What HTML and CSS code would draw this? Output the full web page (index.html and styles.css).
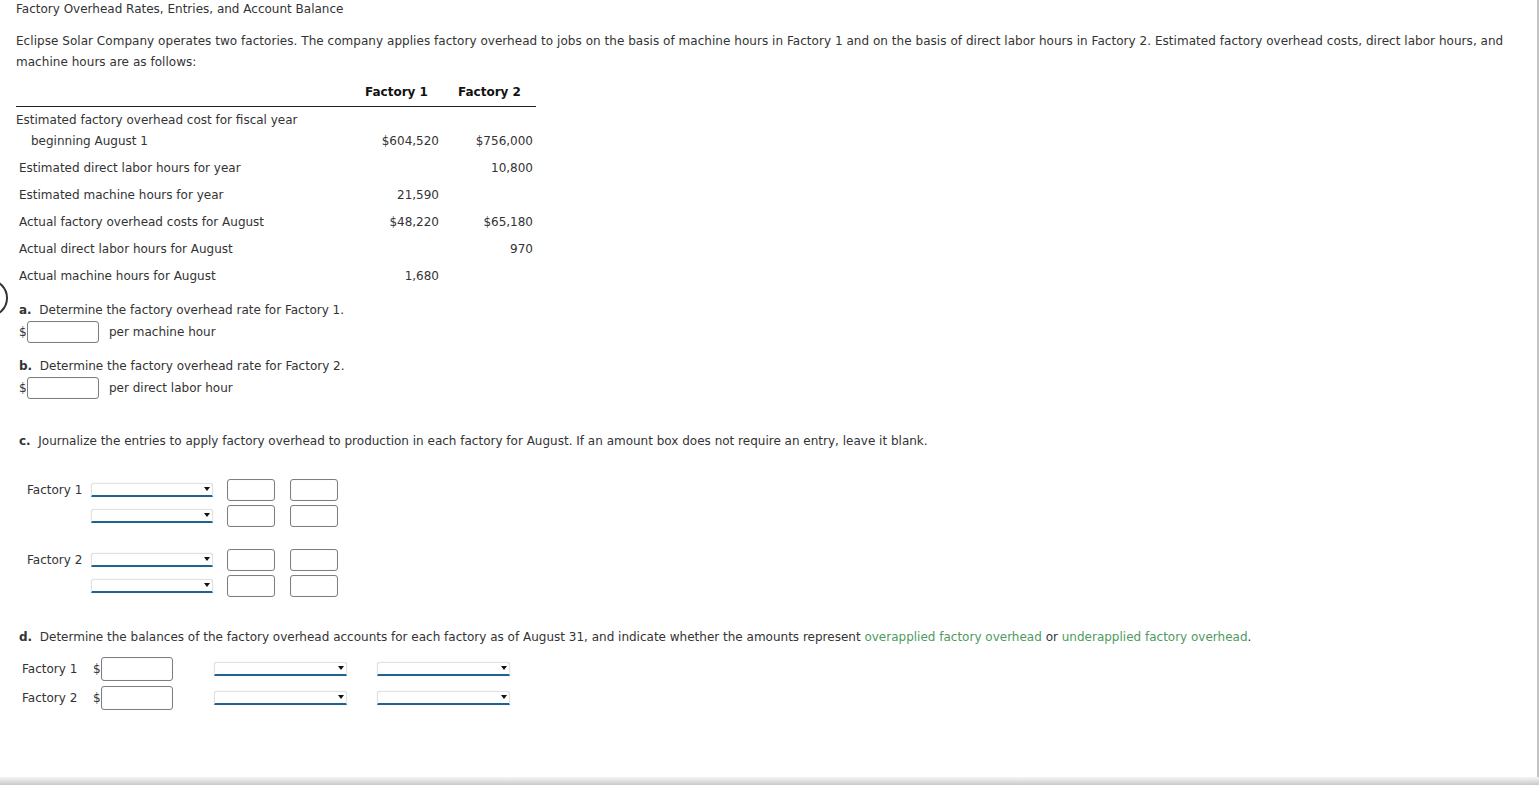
FILE: index.html
```html
<!DOCTYPE html>
<html>
<head>
<meta charset="utf-8">
<link rel="stylesheet" href="styles.css">
</head>
<body>
<div class="page">
  <div class="ring"></div>
  <div class="title">Factory Overhead Rates, Entries, and Account Balance</div>
  <p class="intro">Eclipse Solar Company operates two factories. The company applies factory overhead to jobs on the basis of machine hours in Factory 1 and on the basis of direct labor hours in Factory 2. Estimated factory overhead costs, direct labor hours, and machine hours are as follows:</p>

  <table class="data">
    <thead>
      <tr><th class="lbl"></th><th class="num-h">Factory 1</th><th class="num-h">Factory 2</th></tr>
    </thead>
    <tbody>
      <tr class="first">
        <td class="lbl first-lbl">Estimated factory overhead cost for fiscal year<br><span class="indent">beginning August 1</span></td>
        <td class="num bottom">$604,520</td>
        <td class="num bottom">$756,000</td>
      </tr>
      <tr><td class="lbl">Estimated direct labor hours for year</td><td class="num"></td><td class="num">10,800</td></tr>
      <tr><td class="lbl">Estimated machine hours for year</td><td class="num">21,590</td><td class="num"></td></tr>
      <tr><td class="lbl">Actual factory overhead costs for August</td><td class="num">$48,220</td><td class="num">$65,180</td></tr>
      <tr><td class="lbl">Actual direct labor hours for August</td><td class="num"></td><td class="num">970</td></tr>
      <tr><td class="lbl">Actual machine hours for August</td><td class="num">1,680</td><td class="num"></td></tr>
    </tbody>
  </table>

  <p class="q q-a"><b>a.</b>&nbsp; Determine the factory overhead rate for Factory 1.</p>
  <div class="rate-row">
    <span class="dollar">$</span><input class="box box-rate" type="text"><span class="unit">per machine hour</span>
  </div>

  <p class="q q-b"><b>b.</b>&nbsp; Determine the factory overhead rate for Factory 2.</p>
  <div class="rate-row">
    <span class="dollar">$</span><input class="box box-rate" type="text"><span class="unit">per direct labor hour</span>
  </div>

  <p class="q q-c"><b>c.</b>&nbsp; Journalize the entries to apply factory overhead to production in each factory for August. If an amount box does not require an entry, leave it blank.</p>

  <div class="journal">
    <div class="jgroup">
      <div class="jrow">
        <span class="jlabel">Factory 1</span>
        <span class="dd dd-j"></span>
        <input class="box box-amt" type="text"><input class="box box-amt" type="text">
      </div>
      <div class="jrow">
        <span class="jlabel"></span>
        <span class="dd dd-j"></span>
        <input class="box box-amt" type="text"><input class="box box-amt" type="text">
      </div>
    </div>
    <div class="jgroup">
      <div class="jrow">
        <span class="jlabel">Factory 2</span>
        <span class="dd dd-j"></span>
        <input class="box box-amt" type="text"><input class="box box-amt" type="text">
      </div>
      <div class="jrow">
        <span class="jlabel"></span>
        <span class="dd dd-j"></span>
        <input class="box box-amt" type="text"><input class="box box-amt" type="text">
      </div>
    </div>
  </div>

  <p class="q q-d"><b>d.</b>&nbsp; Determine the balances of the factory overhead accounts for each factory as of August 31, and indicate whether the amounts represent <span class="term">overapplied factory overhead</span> or <span class="term">underapplied factory overhead</span>.</p>

  <div class="balances">
    <div class="brow">
      <span class="blabel">Factory 1</span><span class="dollar">$</span><input class="box box-bal" type="text">
      <span class="dd dd-b dd-first"></span><span class="dd dd-b"></span>
    </div>
    <div class="brow">
      <span class="blabel">Factory 2</span><span class="dollar">$</span><input class="box box-bal" type="text">
      <span class="dd dd-b dd-first"></span><span class="dd dd-b"></span>
    </div>
  </div>
</div>
<div class="shade"></div>
</body>
</html>
```

FILE: styles.css
```css
html, body {
  margin: 0;
  padding: 0;
  background: #ffffff;
  overflow: hidden;
}

body {
  font-family: "DejaVu Sans", Verdana, sans-serif;
  font-size: 12px;
  color: #333333;
}

.page {
  position: relative;
  box-sizing: border-box;
  width: 1539px;
  height: 777px;
  padding-left: 16px;
  padding-top: 1px;
  border-right: 2px solid #c4c4c4;
  overflow: hidden;
}

.ring {
  position: absolute;
  left: -30px;
  top: 279px;
  width: 34px;
  height: 34px;
  border: 2px solid #333;
  border-radius: 50%;
}

.title {
  line-height: 17px;
}

.intro {
  margin: 13px 0 0 0;
  line-height: 21px;
  width: 1500px;
  letter-spacing: 0.04px;
}

.data {
  margin-top: 9px;
  border-collapse: collapse;
  width: 520px;
}

.data th {
  padding: 0 0 3px 0;
  line-height: 21px;
  border-bottom: 1px solid #222;
  font-weight: bold;
  color: #111;
}

.data th.lbl {
  width: 334px;
}

.data th.num-h {
  width: 93px;
  text-align: center;
}

.data td {
  padding: 3px 0;
  line-height: 21px;
  vertical-align: top;
}

.data td.lbl {
  padding-left: 3px;
}

.data td.first-lbl {
  padding-left: 0;
}

.indent {
  padding-left: 15px;
}

.data td.num {
  text-align: right;
  padding-right: 4px;
}

.data td.num + td.num {
  padding-right: 3px;
}

.data td.bottom {
  vertical-align: bottom;
}

.q {
  margin: 0;
  padding-left: 3px;
  line-height: 17px;
}

.q b {
  color: #333;
}

.q-a { margin-top: 12px; }
.q-b { margin-top: 15px; }
.q-c { margin-top: 34px; }
.q-d { margin-top: 32px; }

.rate-row {
  display: flex;
  align-items: center;
  height: 22px;
  margin-top: 2px;
  padding-left: 3px;
}

.dollar {
  width: 8px;
  line-height: 17px;
}

.box {
  box-sizing: border-box;
  margin: 0;
  padding: 0;
  border: 1px solid #7e7e7e;
  border-radius: 3px;
  background: #fff;
  box-shadow: inset 0 0 1px #ddd;
  font: inherit;
}

.box-rate {
  width: 72px;
  height: 22px;
}

.unit {
  margin-left: 10px;
}

.journal {
  margin-top: 29px;
  padding-left: 11px;
}

.jgroup {
  display: flex;
  flex-direction: column;
  gap: 4px;
}

.jgroup + .jgroup {
  margin-top: 22px;
}

.jrow {
  display: flex;
  align-items: center;
  height: 22px;
}

.jlabel {
  width: 64px;
}

.dd {
  position: relative;
  box-sizing: border-box;
  display: block;
  height: 14px;
  border: 1px solid #e2e2e2;
  border-bottom: 2px solid #1f6390;
  border-radius: 3px 3px 0 0;
  box-shadow: 0 0 1px #ccc;
  background: #fff;
}

.dd::after {
  content: "";
  position: absolute;
  right: 2px;
  top: 3px;
  border-left: 3.5px solid transparent;
  border-right: 3.5px solid transparent;
  border-top: 4px solid #111;
}

.dd-j {
  width: 122px;
  margin-right: 14px;
}

.box-amt {
  width: 48px;
  height: 22px;
}

.box-amt + .box-amt {
  margin-left: 15px;
}

.balances {
  margin-top: 11px;
  padding-left: 6px;
  display: flex;
  flex-direction: column;
  gap: 5px;
}

.brow {
  display: flex;
  align-items: center;
  height: 24px;
}

.blabel {
  width: 71px;
}

.box-bal {
  width: 72px;
  height: 24px;
}

.dd-b {
  width: 133px;
}

.dd-first {
  margin-left: 41px;
  margin-right: 30px;
}

.term {
  color: #4f9a5e;
}

.shade {
  width: 1539px;
  height: 8px;
  background: linear-gradient(#f6f6f6, #c9c9c9);
}
```
